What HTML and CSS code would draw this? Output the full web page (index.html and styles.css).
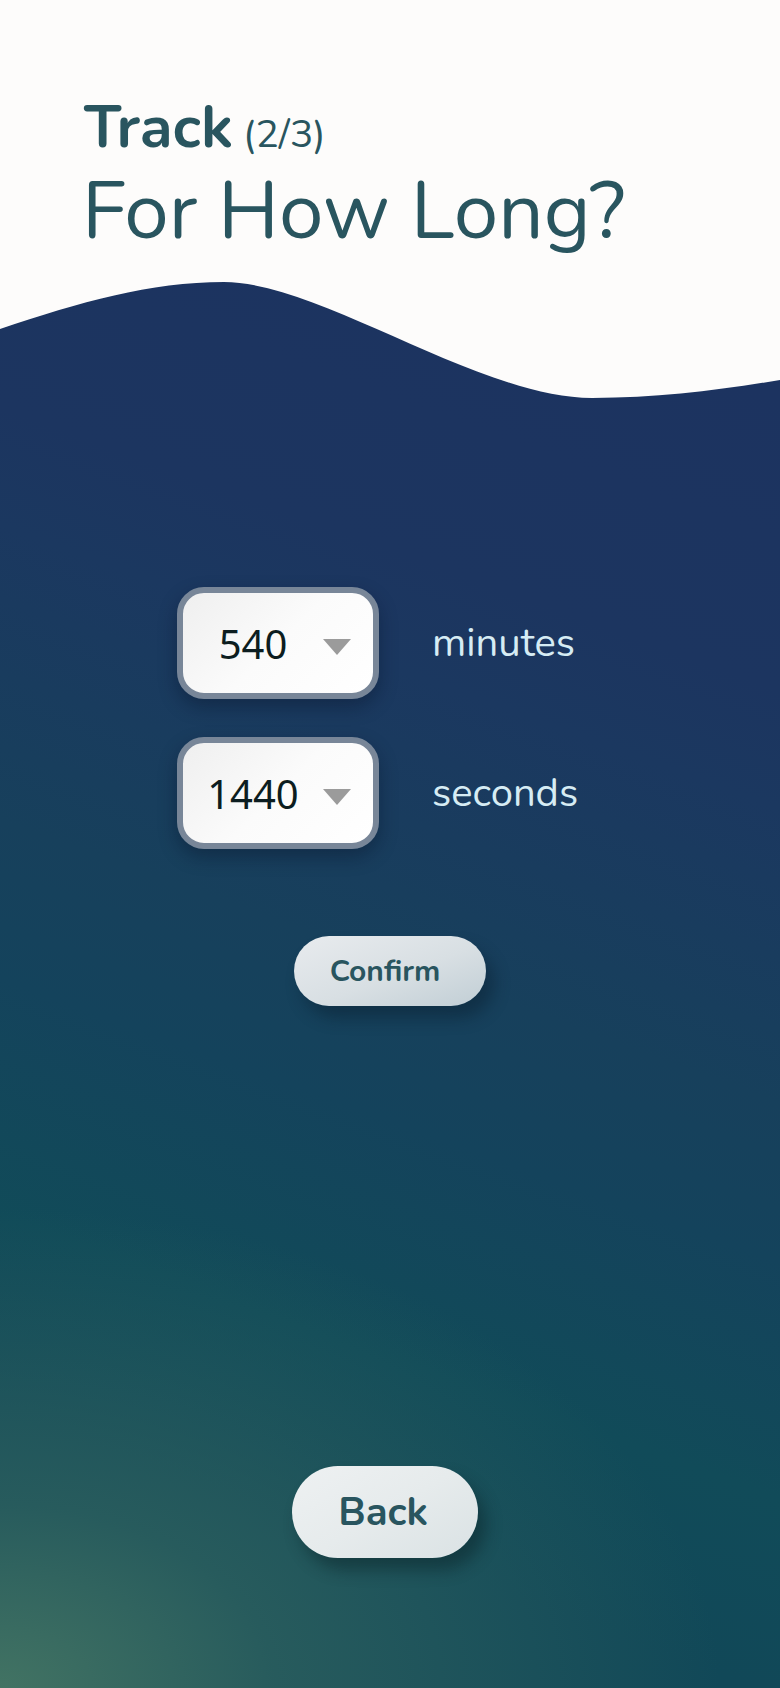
FILE: index.html
```html
<!DOCTYPE html>
<html lang="en">
<head>
<meta charset="utf-8">
<title>Track (2/3) - For How Long?</title>
<link rel="stylesheet" href="styles.css">
</head>
<body>
<div class="page">
  <header class="top">
    <div class="step"><span class="step-name">Track</span><span class="step-count">(2/3)</span></div>
    <h1 class="question">For How Long?</h1>
  </header>
  <svg class="wave" viewBox="0 0 780 130" preserveAspectRatio="none" aria-hidden="true">
    <path d="M0,0 H780 V110 C720,120 660,128 592,128 C480,128 320,12 224,12 C150,12 80,32 0,59 Z" fill="#fdfcfb"/>
  </svg>
  <main class="content">
    <div class="fields">
      <div class="field">
        <div class="select"><span class="select-value">540</span><span class="caret"></span></div>
        <span class="unit">minutes</span>
      </div>
      <div class="field">
        <div class="select"><span class="select-value">1440</span><span class="caret"></span></div>
        <span class="unit">seconds</span>
      </div>
    </div>
    <button class="btn btn-confirm">Confirm</button>
    <button class="btn btn-back">Back</button>
  </main>
</div>
</body>
</html>
```

FILE: styles.css
```css
* { box-sizing: border-box; }
html, body { margin: 0; padding: 0; }
body {
  font-family: "Nunito", "Lato", "Noto Sans", sans-serif;
  background: #1d3160;
}
.page {
  width: 780px;
  min-height: 1688px;
  display: flex;
  flex-direction: column;
  background:
    radial-gradient(ellipse 720px 480px at 0% 100%, rgba(66,115,99,1) 0%, rgba(54,104,96,0.6) 38%, rgba(20,75,90,0) 100%),
    linear-gradient(200deg, #1d3160 0%, #1c3360 20%, #1c3560 35%, #1b3860 41%, #17405c 56%, #14435c 64%, #114b59 76%, #114858 86%, #114858 100%);
}
.top {
  background: #fdfcfb;
  height: 270px;
  padding: 97px 0 0 84px;
  color: #29555f;
}
.step {
  line-height: 60px;
  height: 60px;
}
.step-name {
  font-size: 60px;
  font-weight: 700;
}
.step-count {
  margin-left: 10px;
  font-size: 39px;
  font-weight: 400;
}
.question {
  margin: 15px 0 0 -2px;
  font-size: 80px;
  line-height: 80px;
  font-weight: 400;
}
.wave {
  display: block;
  width: 780px;
  height: 130px;
}
.content {
  display: flex;
  flex-direction: column;
  padding-top: 187px;
}
.fields {
  display: flex;
  flex-direction: column;
  gap: 38px;
}
.field {
  display: flex;
  align-items: center;
  margin-left: 177px;
}
.select {
  width: 202px;
  height: 112px;
  border: 6px solid #788698;
  border-radius: 27px;
  background: linear-gradient(135deg, #efefef 0%, #fbfbfb 50%, #ffffff 100%);
  box-shadow: 0 8px 18px rgba(5, 15, 35, 0.35);
  display: flex;
  align-items: center;
}
.select-value {
  width: 140px;
  text-align: center;
  font-family: "Noto Sans", "Lato", sans-serif;
  font-size: 40px;
  color: #0c1d20;
}
.caret {
  width: 0;
  height: 0;
  margin-top: 8px;
  border-left: 14px solid transparent;
  border-right: 14px solid transparent;
  border-top: 16px solid #9b9b9b;
}
.unit {
  margin-left: 53px;
  font-size: 40px;
  color: #d6ecf4;
}
.btn {
  font-family: "Nunito", "Lato", "Noto Sans", sans-serif;
  font-weight: 700;
  color: #29555f;
  border: none;
  padding: 0;
  align-self: center;
}
.btn-confirm {
  margin-top: 87px;
  width: 192px;
  height: 70px;
  padding-right: 10px;
  border-radius: 35px;
  font-size: 30px;
  background: linear-gradient(160deg, #e8ebee 0%, #d8dfe3 55%, #c1ced5 100%);
  box-shadow: 8px 12px 16px rgba(8, 25, 40, 0.4);
}
.btn-back {
  margin-top: 460px;
  margin-right: 10px;
  width: 186px;
  height: 92px;
  padding-right: 4px;
  border-radius: 46px;
  font-size: 40px;
  background: linear-gradient(150deg, #eef1f2 0%, #e6ebec 50%, #dae2e4 100%);
  box-shadow: 8px 12px 16px rgba(8, 30, 35, 0.45);
}
```
